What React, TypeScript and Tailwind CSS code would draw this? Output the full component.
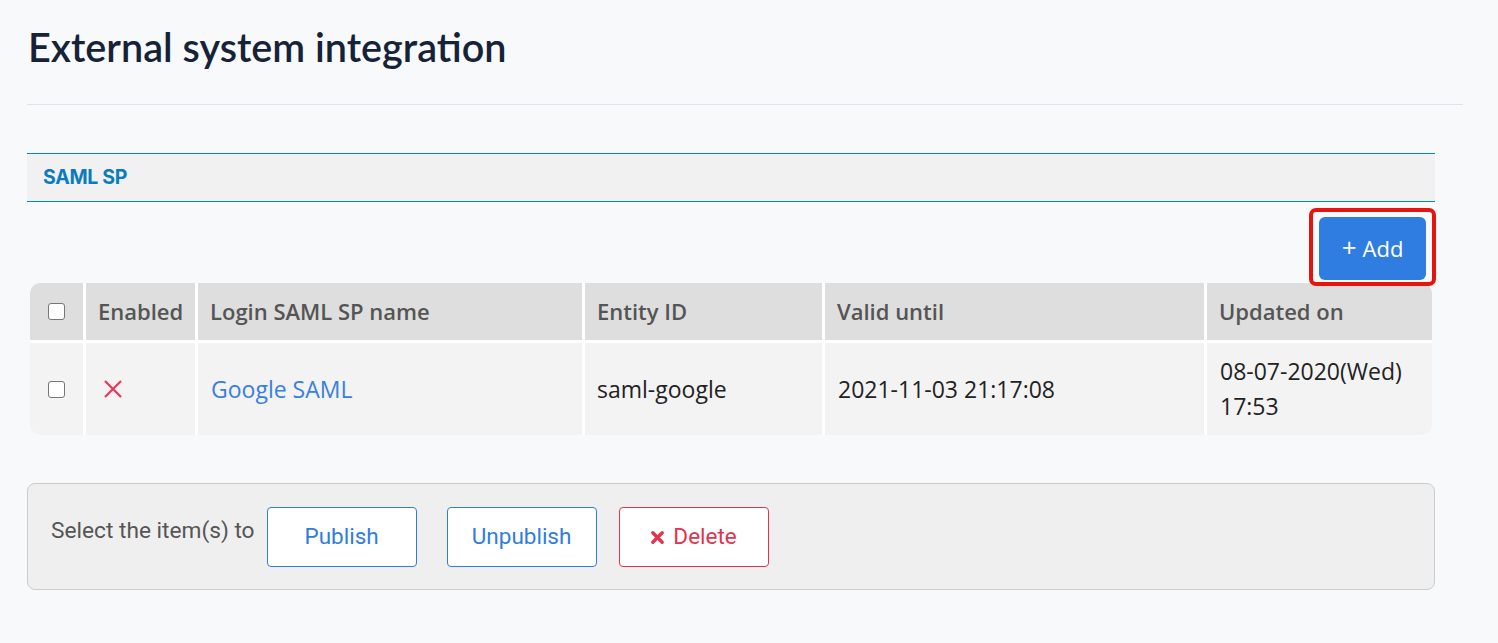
import React from 'react';

const cols = [
  { key: 'check', w: 'w-[53px]' },
  { key: 'enabled', label: 'Enabled', w: 'w-[109px]' },
  { key: 'name', label: 'Login SAML SP name', w: 'w-[384px]' },
  { key: 'entity', label: 'Entity ID', w: 'w-[237px]' },
  { key: 'valid', label: 'Valid until', w: 'w-[379px]' },
  { key: 'updated', label: 'Updated on', w: 'flex-1' },
];

const Checkbox = () => (
  <span className="inline-block w-[17px] h-[17px] rounded-[3px] border-[1.5px] border-[#767676] bg-white" />
);

const CrossIcon = () => (
  <svg width="20" height="20" viewBox="0 0 20 20" className="text-[#e8385a]">
    <path d="M2 2 L18 18 M18 2 L2 18" stroke="currentColor" strokeWidth="2.2" fill="none" />
  </svg>
);

const BoldCross = () => (
  <svg width="15" height="15" viewBox="0 0 16 16" className="text-[#e0344f]">
    <path d="M3 3 L13 13 M13 3 L3 13" stroke="currentColor" strokeWidth="3.6" strokeLinecap="round" fill="none" />
  </svg>
);

export default function App() {
  return (
    <div className="min-h-[643px] bg-[#f8f9fb] font-['Lato',sans-serif] text-[#222] pl-[27px] pr-[35px] pt-[22px]">
      <h1 className="text-[39.6px] font-semibold text-[#152238] leading-[50px] pl-[1px]">External system integration</h1>
      <div className="mt-[32px] h-px bg-[#dde3ea]" />

      <div className="mt-[48px] mr-[28px]">
        {/* section header */}
        <div className="bg-[#f1f1f1] h-[49px] flex items-center pl-[16px] shadow-[inset_0_1px_0_#0284d0,inset_0_-1px_0_#0284d0]">
          <span className="text-[19.5px] font-bold text-[#0b7bc0] font-['Inter',sans-serif] tracking-[-0.3px]">SAML SP</span>
        </div>

        <div className="flex justify-end mt-[15px] pr-[9px]">
          <div className="relative">
            <button className="bg-[#2f7de1] text-white rounded-[6px] w-[107px] h-[63px] text-[22px] font-['Open_Sans',sans-serif] flex items-center justify-center gap-[6px]">
              <span className="text-[26px] leading-none -mt-[3px]">+</span>
              <span>Add</span>
            </button>
            <div className="absolute -left-[10px] -right-[10px] -top-[9px] -bottom-[6px] border-[4px] border-[#e5140f] rounded-[7px] pointer-events-none" />
          </div>
        </div>

        {/* table */}
        <div className="mx-[3px] mt-[3px] rounded-[10px] overflow-hidden font-['Open_Sans',sans-serif]">
          <div className="flex gap-[3px] bg-white">
            {cols.map((c) => (
              <div
                key={c.key}
                className={`${c.w} bg-[#dedede] h-[57px] flex items-center ${c.key === 'check' ? 'justify-center' : 'pl-[12px]'} text-[22px] font-semibold text-[#555] whitespace-nowrap`}
              >
                {c.key === 'check' ? <Checkbox /> : c.label}
              </div>
            ))}
          </div>
          <div className="flex gap-[3px] bg-white pt-[3px] text-[23px] text-[#222]">
            <div className="w-[53px] bg-[#f3f3f3] h-[92px] flex items-center justify-center">
              <Checkbox />
            </div>
            <div className="w-[109px] bg-[#f3f3f3] flex items-center pl-[17px]">
              <CrossIcon />
            </div>
            <div className="w-[384px] bg-[#f3f3f3] flex items-center pl-[13px]">
              <a className="text-[#3a7ee0]">Google SAML</a>
            </div>
            <div className="w-[237px] bg-[#f3f3f3] flex items-center pl-[12px]">saml-google</div>
            <div className="w-[379px] bg-[#f3f3f3] flex items-center pl-[13px]">2021-11-03 21:17:08</div>
            <div className="flex-1 bg-[#f3f3f3] flex items-center pl-[13px] leading-[35px] whitespace-nowrap">
              <div>
                08-07-2020(Wed)
                <br />
                17:53
              </div>
            </div>
          </div>
        </div>

        {/* bulk actions */}
        <div className="mt-[48px] bg-[#efefef] border border-[#cccccc] rounded-[8px] h-[107px] flex items-start pl-[23px] pt-[23px] font-['Roboto',sans-serif]">
          <span className="text-[22.7px] text-[#555] mt-[7px]">Select the item(s) to</span>
          <button className="ml-[12px] w-[150px] h-[60px] bg-white border border-[#2f7de1] rounded-[4px] text-[#2f7de1] text-[22.5px]">Publish</button>
          <button className="ml-[30px] w-[150px] h-[60px] bg-white border border-[#2f7de1] rounded-[4px] text-[#2f7de1] text-[22.5px]">Unpublish</button>
          <button className="ml-[22px] w-[150px] h-[60px] bg-white border border-[#e0344f] rounded-[4px] text-[#e0344f] text-[22.5px] flex items-center justify-center gap-[8px]">
            <BoldCross />
            Delete
          </button>
        </div>
      </div>
    </div>
  );
}
